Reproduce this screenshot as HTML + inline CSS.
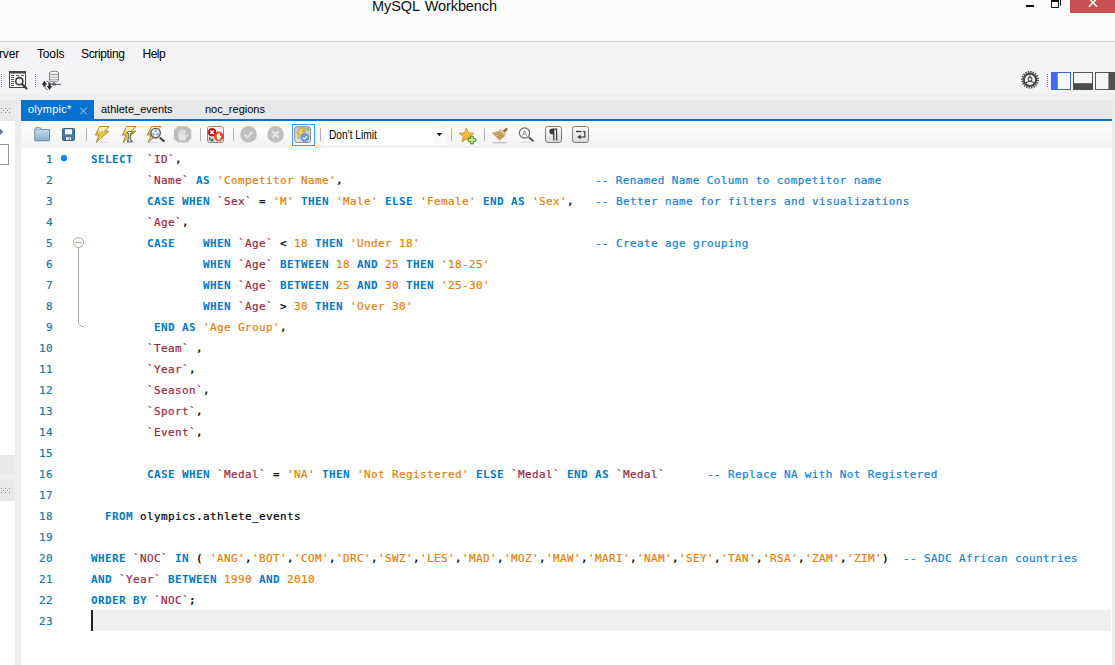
<!DOCTYPE html>
<html lang="en">
<head>
<meta charset="utf-8">
<title>MySQL Workbench</title>
<style>
*{box-sizing:border-box}
html,body{margin:0;padding:0}
html{background:#f4f4f7}
body{width:1115px;height:665px;overflow:hidden;position:relative;background:#f4f4f7;font-family:"Liberation Sans",sans-serif;color:#000}
.abs{position:absolute}
#titlebar{left:0;top:0;width:1115px;height:41px;background:#fbfbfb}
#titleline{left:0;top:41px;width:1115px;height:1px;background:#d3d3d3}
#title{left:372px;top:-4px;word-spacing:1.500px;letter-spacing:-0.1px;font-size:14.5px;line-height:20px;white-space:nowrap;color:#111}
#close{left:1070px;top:0;width:45px;height:13px;background:#c75050}
#menubar{left:0;top:42px;width:1115px;height:56px;background:#f4f4f7}
.menu{top:46px;font-size:12px;line-height:16px;white-space:nowrap;letter-spacing:-0.15px}
#leftpanel{left:0;top:100px;width:15px;height:565px;background:#fff}
.lpb{left:0;width:15px;background:#e8e8e8}
#gutter{left:15px;top:100px;width:6px;height:565px;background:#ededf0}
#band{left:0;top:94px;width:1115px;height:6px;background:#efeff1}
#rightstrip{left:1112px;top:100px;width:3px;height:565px;background:#ededf0}
#tabbar{left:21px;top:100px;width:1091px;height:19px;background:#e8e8e8}
#tabline{left:21px;top:119px;width:1091px;height:2px;background:#0771ce}
#tab1{left:21px;top:100px;width:73px;height:20px;background:#0771ce}
.tab{top:102px;font-size:11px;line-height:14px;white-space:nowrap}
#edtb{left:21px;top:121px;width:1091px;height:27px;background:linear-gradient(#ffffff,#f1f1f3)}
#editor{left:21px;top:148px;width:1091px;height:517px;background:#fff}
#code{left:21px;top:149px;width:1090px;font-family:"DejaVu Sans Mono","Liberation Mono",monospace;font-size:11px;letter-spacing:0.375px;line-height:21px;color:#000;-webkit-text-stroke:0.2px}
.ln{position:relative;height:21px}
.no{position:absolute;right:1058px;top:0;color:#23779a}
.tx{position:absolute;left:70px;top:0;white-space:pre}
.cur::before{content:"";position:absolute;left:70px;top:-1px;width:1020px;height:21px;background:#efefef}
.cur::after{content:"";position:absolute;left:70px;top:-1px;width:2px;height:21px;background:#222}
#code b{color:#0079c6;font-weight:bold;-webkit-text-stroke:0}
#code .i{color:#98283e}
#code .o{font-weight:bold;color:#111;-webkit-text-stroke:0}
#code .s{color:#e47e0a}
#code .n{color:#e47e0a}
#code .c{color:#1282d6}
svg{position:absolute;overflow:hidden}
#limit{left:329px;top:127px;font-size:12px;line-height:16px;white-space:nowrap;transform:scaleX(0.85);transform-origin:0 0;z-index:2}
</style>
</head>
<body>
<div id="titlebar" class="abs"></div>
<div id="titleline" class="abs"></div>
<div id="title" class="abs">MySQL Workbench</div>
<div id="close" class="abs"></div>
<div id="menubar" class="abs"></div>
<div class="menu abs" style="left:-1px">rver</div>
<div class="menu abs" style="left:37px">Tools</div>
<div class="menu abs" style="left:81px;letter-spacing:-0.35px">Scripting</div>
<div class="menu abs" style="left:142.500px;letter-spacing:-0.5px">Help</div>
<div id="band" class="abs"></div>
<div id="leftpanel" class="abs"></div>
<div class="lpb abs" style="top:100px;height:21px"></div>
<div class="lpb abs" style="top:455px;height:19px"></div>
<div class="lpb abs" style="top:474px;height:6px;background:#ededf0"></div>
<div class="lpb abs" style="top:480px;height:21px"></div>
<div id="gutter" class="abs"></div>
<div id="rightstrip" class="abs"></div>
<div id="tabbar" class="abs"></div>
<div id="tab1" class="abs"></div>
<div id="tabline" class="abs"></div>
<div class="tab abs" style="left:28px;color:#fff;letter-spacing:0.25px">olympic*</div>
<div class="tab abs" style="left:101px">athlete_events</div>
<div class="tab abs" style="left:205px">noc_regions</div>
<div id="edtb" class="abs"></div>
<div id="editor" class="abs"></div>
<div id="limit" class="abs">Don't Limit</div>
<div id="code" class="abs">
<div class="ln"><span class="no">1</span><span class="tx"><b>SELECT</b>  <span class="i">`ID`</span><span class="o">,</span></span></div>
<div class="ln"><span class="no">2</span><span class="tx">        <span class="i">`Name`</span> <b>AS</b> <span class="s">'Competitor Name'</span><span class="o">,</span>                                    <span class="c">-- Renamed Name Column to competitor name</span></span></div>
<div class="ln"><span class="no">3</span><span class="tx">        <b>CASE</b> <b>WHEN</b> <span class="i">`Sex`</span> <span class="o">=</span> <span class="s">'M'</span> <b>THEN</b> <span class="s">'Male'</span> <b>ELSE</b> <span class="s">'Female'</span> <b>END</b> <b>AS</b> <span class="s">'Sex'</span><span class="o">,</span>   <span class="c">-- Better name for filters and visualizations</span></span></div>
<div class="ln"><span class="no">4</span><span class="tx">        <span class="i">`Age`</span><span class="o">,</span></span></div>
<div class="ln"><span class="no">5</span><span class="tx">        <b>CASE</b>    <b>WHEN</b> <span class="i">`Age`</span> <span class="o">&lt;</span> <span class="n">18</span> <b>THEN</b> <span class="s">'Under 18'</span>                         <span class="c">-- Create age grouping</span></span></div>
<div class="ln"><span class="no">6</span><span class="tx">                <b>WHEN</b> <span class="i">`Age`</span> <b>BETWEEN</b> <span class="n">18</span> <b>AND</b> <span class="n">25</span> <b>THEN</b> <span class="s">'18-25'</span></span></div>
<div class="ln"><span class="no">7</span><span class="tx">                <b>WHEN</b> <span class="i">`Age`</span> <b>BETWEEN</b> <span class="n">25</span> <b>AND</b> <span class="n">30</span> <b>THEN</b> <span class="s">'25-30'</span></span></div>
<div class="ln"><span class="no">8</span><span class="tx">                <b>WHEN</b> <span class="i">`Age`</span> <span class="o">&gt;</span> <span class="n">30</span> <b>THEN</b> <span class="s">'Over 30'</span></span></div>
<div class="ln"><span class="no">9</span><span class="tx">         <b>END</b> <b>AS</b> <span class="s">'Age Group'</span><span class="o">,</span></span></div>
<div class="ln"><span class="no">10</span><span class="tx">        <span class="i">`Team`</span> <span class="o">,</span></span></div>
<div class="ln"><span class="no">11</span><span class="tx">        <span class="i">`Year`</span><span class="o">,</span></span></div>
<div class="ln"><span class="no">12</span><span class="tx">        <span class="i">`Season`</span><span class="o">,</span></span></div>
<div class="ln"><span class="no">13</span><span class="tx">        <span class="i">`Sport`</span><span class="o">,</span></span></div>
<div class="ln"><span class="no">14</span><span class="tx">        <span class="i">`Event`</span><span class="o">,</span></span></div>
<div class="ln"><span class="no">15</span><span class="tx"></span></div>
<div class="ln"><span class="no">16</span><span class="tx">        <b>CASE</b> <b>WHEN</b> <span class="i">`Medal`</span> <span class="o">=</span> <span class="s">'NA'</span> <b>THEN</b> <span class="s">'Not Registered'</span> <b>ELSE</b> <span class="i">`Medal`</span> <b>END</b> <b>AS</b> <span class="i">`Medal`</span>      <span class="c">-- Replace NA with Not Registered</span></span></div>
<div class="ln"><span class="no">17</span><span class="tx"></span></div>
<div class="ln"><span class="no">18</span><span class="tx">  <b>FROM</b> olympics<span class="o">.</span>athlete_events</span></div>
<div class="ln"><span class="no">19</span><span class="tx"></span></div>
<div class="ln"><span class="no">20</span><span class="tx"><b>WHERE</b> <span class="i">`NOC`</span> <b>IN</b> <span class="o">(</span> <span class="s">'ANG'</span><span class="o">,</span><span class="s">'BOT'</span><span class="o">,</span><span class="s">'COM'</span><span class="o">,</span><span class="s">'DRC'</span><span class="o">,</span><span class="s">'SWZ'</span><span class="o">,</span><span class="s">'LES'</span><span class="o">,</span><span class="s">'MAD'</span><span class="o">,</span><span class="s">'MOZ'</span><span class="o">,</span><span class="s">'MAW'</span><span class="o">,</span><span class="s">'MARI'</span><span class="o">,</span><span class="s">'NAM'</span><span class="o">,</span><span class="s">'SEY'</span><span class="o">,</span><span class="s">'TAN'</span><span class="o">,</span><span class="s">'RSA'</span><span class="o">,</span><span class="s">'ZAM'</span><span class="o">,</span><span class="s">'ZIM'</span><span class="o">)</span>  <span class="c">-- SADC African countries</span></span></div>
<div class="ln"><span class="no">21</span><span class="tx"><b>AND</b> <span class="i">`Year`</span> <b>BETWEEN</b> <span class="n">1990</span> <b>AND</b> <span class="n">2010</span></span></div>
<div class="ln"><span class="no">22</span><span class="tx"><b>ORDER</b> <b>BY</b> <span class="i">`NOC`</span><span class="o">;</span></span></div>
<div class="ln cur"><span class="no">23</span><span class="tx"></span></div>
</div>
<svg id="ov" width="1115" height="665" viewBox="0 0 1115 665" style="left:0;top:0;pointer-events:none">
<defs>
<linearGradient id="gFolder" x1="0" y1="0" x2="0" y2="1"><stop offset="0" stop-color="#cfe3f1"/><stop offset="1" stop-color="#85abc9"/></linearGradient>
<linearGradient id="gBolt" x1="0" y1="0" x2="0" y2="1"><stop offset="0" stop-color="#fdf9d8"/><stop offset="0.28" stop-color="#f6ea9c"/><stop offset="0.34" stop-color="#e2c440"/><stop offset="0.6" stop-color="#e4c84c"/><stop offset="1" stop-color="#f2e08a"/></linearGradient>
<linearGradient id="gBtn" x1="0" y1="0" x2="0" y2="1"><stop offset="0" stop-color="#fdfdfd"/><stop offset="1" stop-color="#d9d9d9"/></linearGradient>
<linearGradient id="gTog" x1="0" y1="0" x2="0" y2="1"><stop offset="0" stop-color="#c2c2c2"/><stop offset="1" stop-color="#e4e4e4"/></linearGradient>
<linearGradient id="gStar" x1="0" y1="0" x2="0" y2="1"><stop offset="0" stop-color="#fbd65a"/><stop offset="1" stop-color="#f0a21e"/></linearGradient>
<linearGradient id="gBroom" x1="0" y1="0" x2="1" y2="1"><stop offset="0" stop-color="#e8cf95"/><stop offset="1" stop-color="#c39a4c"/></linearGradient>
</defs>

<!-- window buttons -->
<rect x="1026" y="5" width="8" height="2" fill="#111"/>
<path d="M1051.500 0 V7.500 H1058.500 V0 M1051 1.500 H1059 M1060.500 0 V5.700" fill="none" stroke="#111" stroke-width="1"/>
<rect x="1051" y="0" width="8" height="2" fill="#111"/>
<path d="M1089 -1.600 L1097 6.800 M1097 -1.600 L1089 6.800" stroke="#fff" stroke-width="1.500" fill="none"/>

<!-- main toolbar -->
<g transform="translate(1 74)" fill="#6d7f9c"><rect x="0" y="0" width="1" height="1"/><rect x="0" y="2" width="1" height="1"/><rect x="0" y="4" width="1" height="1"/><rect x="0" y="6" width="1" height="1"/><rect x="0" y="8" width="1" height="1"/><rect x="0" y="10" width="1" height="1"/><rect x="0" y="12" width="1" height="1"/></g>
<g transform="translate(35 74)" fill="#6d7f9c"><rect x="0" y="0" width="1" height="1"/><rect x="0" y="2" width="1" height="1"/><rect x="0" y="4" width="1" height="1"/><rect x="0" y="6" width="1" height="1"/><rect x="0" y="8" width="1" height="1"/><rect x="0" y="10" width="1" height="1"/><rect x="0" y="12" width="1" height="1"/></g>
<g>
<rect x="9.500" y="71.500" width="16" height="16" fill="#f7f7f7" stroke="#454545" stroke-width="1"/>
<rect x="9" y="71" width="17" height="2.500" fill="#454545"/>
<g fill="#555"><rect x="11" y="75" width="3" height="1"/><rect x="16" y="75" width="3" height="1"/><rect x="21" y="75" width="3" height="1"/><rect x="11" y="77" width="3" height="1"/><rect x="11" y="79" width="3" height="1"/><rect x="11" y="81" width="3" height="1"/><rect x="11" y="83" width="3" height="1"/><rect x="11" y="85" width="3" height="1"/></g>
<circle cx="19.300" cy="81.200" r="3.600" fill="#f2f2f2" stroke="#3c3c3c" stroke-width="1.600"/>
<path d="M22.200 84.200 L26.500 88.500" stroke="#3c3c3c" stroke-width="2.200" stroke-linecap="round"/>
</g>
<g>
<path d="M49.500 73 V80 C49.500 82.300 58.500 82.300 58.500 80 V73" fill="#fdfdfd" stroke="#777" stroke-width="0.900"/>
<ellipse cx="54" cy="73" rx="4.500" ry="1.800" fill="#fdfdfd" stroke="#777" stroke-width="0.900"/>
<path d="M49.500 75.700 C49.500 78 58.500 78 58.500 75.700 M49.500 78.200 C49.500 80.500 58.500 80.500 58.500 78.200" fill="none" stroke="#8a8a8a" stroke-width="0.800"/>
<path d="M54 82 V84.400 M50.500 84.400 H61" stroke="#555" stroke-width="1" fill="none"/>
<rect x="52" y="83.400" width="4" height="2" fill="#556"/>
<path d="M41.700 84.800 L44.400 80.800 L47.100 84.800 H45.500 V86.800 H43.300 V84.800 Z" fill="#2c2c2c"/>
<path d="M46.800 86 L49.500 90 L52.200 86 H50.600 V82.800 H48.400 V86 Z" fill="#2c2c2c"/>
<path d="M46.500 81.300 C48.500 81.500 49.500 82.600 49.600 84 M45 87.300 C45.300 88.600 46.300 89.400 47.600 89.500" stroke="#444" stroke-width="0.900" fill="none"/>
</g>
<!-- right toolbar -->
<g>
<circle cx="1030" cy="79.800" r="8" fill="none" stroke="#474747" stroke-width="1.800" stroke-dasharray="1.350 1.163"/>
<circle cx="1030" cy="79.800" r="6.200" fill="#f4f4f7" stroke="#474747" stroke-width="2.200"/>
<circle cx="1030" cy="79.300" r="1.900" fill="#f4f4f7" stroke="#474747" stroke-width="1.100"/>
<path d="M1030 74.500 V77.300 M1025.300 84 C1026.500 80.700 1033.500 80.700 1034.700 84" fill="none" stroke="#474747" stroke-width="1.100"/>
</g>
<g transform="translate(1047 74)" fill="#6d7f9c"><rect x="0" y="0" width="1" height="1"/><rect x="0" y="2" width="1" height="1"/><rect x="0" y="4" width="1" height="1"/><rect x="0" y="6" width="1" height="1"/><rect x="0" y="8" width="1" height="1"/><rect x="0" y="10" width="1" height="1"/><rect x="0" y="12" width="1" height="1"/></g>
<rect x="1051.500" y="72.500" width="19" height="17" fill="#f6f6f8" stroke="#4060d8" stroke-width="1"/>
<rect x="1051" y="72" width="6.800" height="18" fill="#3f6cf0"/>
<rect x="1073.500" y="72.500" width="19" height="17" fill="#f6f6f8" stroke="#555" stroke-width="1"/>
<rect x="1073" y="83.200" width="20" height="6.800" fill="#4c4c4c"/>
<rect x="1095.500" y="72.500" width="19" height="17" fill="#f6f6f8" stroke="#555" stroke-width="1"/>
<rect x="1108.400" y="72" width="7" height="18" fill="#505050"/>

<!-- left panel -->
<g transform="translate(1 108)" fill="#8c8c8c"><rect x="0" y="0" width="1" height="1"/><rect x="4" y="0" width="1" height="1"/><rect x="8" y="0" width="1" height="1"/><rect x="2" y="2" width="1" height="1"/><rect x="6" y="2" width="1" height="1"/><rect x="0" y="4" width="1" height="1"/><rect x="4" y="4" width="1" height="1"/><rect x="8" y="4" width="1" height="1"/></g>
<g transform="translate(1 488)" fill="#8c8c8c"><rect x="0" y="0" width="1" height="1"/><rect x="4" y="0" width="1" height="1"/><rect x="8" y="0" width="1" height="1"/><rect x="2" y="2" width="1" height="1"/><rect x="6" y="2" width="1" height="1"/><rect x="0" y="4" width="1" height="1"/><rect x="4" y="4" width="1" height="1"/><rect x="8" y="4" width="1" height="1"/></g>
<path d="M-1 129 L0.500 129 L3.200 131.700 L0.500 134.500 L-1 134.500 Z" fill="#5f7391"/>
<rect x="-2.500" y="144.500" width="11" height="20" fill="#fff" stroke="#9096a2" stroke-width="1"/>

<!-- tab close -->
<path d="M80 107.500 L87 114.500 M87 107.500 L80 114.500" stroke="#b4d4f2" stroke-width="1" fill="none"/>

<!-- editor toolbar -->
<g>
<path d="M34.700 140.300 V129.800 L35.800 127.700 H40.300 L41.300 129.500 H49 Q49.500 129.500 49.500 130 V140.300 Q49.500 140.800 49 140.800 H35.200 Q34.700 140.800 34.700 140.300 Z" fill="url(#gFolder)" stroke="#5b86a8" stroke-width="0.900"/>
<path d="M35.800 129.600 H40.800" stroke="#7ea3c0" stroke-width="0.800"/>
</g>
<g>
<rect x="62.500" y="128.500" width="12" height="12" rx="1" fill="#4a7a9d" stroke="#35607f" stroke-width="1"/>
<rect x="65" y="129.300" width="7" height="5" fill="#fbfbfb"/>
<rect x="66" y="137" width="5" height="3" fill="#e2e6ea"/>
<rect x="68.800" y="137.500" width="1.200" height="2.200" fill="#5a7f9b"/>
</g>
<g transform="translate(86 128)"><rect x="0" y="0" width="1" height="13" fill="#b4b4b4"/></g>
<ellipse cx="102" cy="142.400" rx="6" ry="0.700" fill="#d8d8d8"/><ellipse cx="129" cy="142.400" rx="6" ry="0.700" fill="#d8d8d8"/><ellipse cx="154" cy="142.400" rx="6" ry="0.700" fill="#d8d8d8"/>
<g transform="translate(95 126)"><path d="M4.6 0.5 L14 0.5 L9.6 5.2 L13.8 5.2 L1.2 16.3 L4 9 L0.4 9 Z" fill="url(#gBolt)" stroke="#a47c22" stroke-width="0.9" stroke-linejoin="round"/></g>
<g transform="translate(122 126)"><path d="M4.6 0.5 L14 0.5 L9.6 5.2 L13.8 5.2 L1.2 16.3 L4 9 L0.4 9 Z" fill="url(#gBolt)" stroke="#a47c22" stroke-width="0.9" stroke-linejoin="round"/></g>
<path d="M128.300 132.600 H131.300 M129.800 132.600 V141 M128.300 141 H131.300" stroke="#2a2a2a" stroke-width="2.400" fill="none" stroke-linecap="round"/>
<path d="M128.400 132.600 H131.200 M129.800 132.600 V141 M128.400 141 H131.200" stroke="#fff" stroke-width="1.100" fill="none" stroke-linecap="round"/>
<g transform="translate(147 126)"><path d="M4.6 0.5 L14 0.5 L9.6 5.2 L13.8 5.2 L1.2 16.3 L4 9 L0.4 9 Z" fill="url(#gBolt)" stroke="#a47c22" stroke-width="0.9" stroke-linejoin="round"/></g>
<g>
<circle cx="155.600" cy="133.100" r="4.700" fill="#f6f3e6" stroke="#5c5c5c" stroke-width="1.400"/>
<circle cx="155.600" cy="130.900" r="1.400" fill="#8fb3e6"/><circle cx="153.400" cy="134.400" r="1.400" fill="#8fb3e6"/><circle cx="157.800" cy="134.400" r="1.400" fill="#8fb3e6"/>
<path d="M159.700 137.500 L164.400 141.600" stroke="#444" stroke-width="2.200" stroke-linecap="butt"/>
</g>
<g>
<path d="M177.800 126.200 H187.300 L191.200 130.100 V138.700 L187.300 142.600 H177.800 L173.900 138.700 V130.100 Z" fill="#bdbdbd"/>
<g fill="#e6e6e6"><rect x="178.600" y="131.200" width="1.400" height="6" rx="0.700"/><rect x="180.400" y="129.300" width="1.400" height="7" rx="0.700"/><rect x="182.200" y="128.900" width="1.400" height="7" rx="0.700"/><rect x="184" y="129.900" width="1.400" height="7" rx="0.700"/><path d="M178.600 134.800 H185.400 V136.200 L187.200 133.800 Q188.300 133.600 188 134.800 L185.600 139 Q184.600 140.600 182.800 140.600 H181.400 Q178.600 140.200 178.600 137.400 Z"/></g>
</g>
<g transform="translate(200 128)"><rect x="0" y="0" width="1" height="13" fill="#b4b4b4"/></g>
<g>
<rect x="207.500" y="126.500" width="16" height="16" rx="2.200" fill="url(#gBtn)" stroke="#8a8a8a" stroke-width="1"/>
<path d="M209.800 137 V140 H213 M211.600 138.500 L213.300 140 L211.600 141.500" stroke="#333" stroke-width="1" fill="none"/>
<circle cx="212.100" cy="132.200" r="3.900" fill="#cc0f1a" stroke="#960a12" stroke-width="0.600"/>
<path d="M210.400 130.500 L213.800 133.900 M213.800 130.500 L210.400 133.900" stroke="#fff" stroke-width="1.400"/>
<path d="M216.900 131.900 H220.500 L223.100 134.500 V138.200 L220.500 140.800 H216.900 L214.300 138.200 V134.500 Z" fill="#e84a14" stroke="#c23a0c" stroke-width="0.500"/>
<path d="M216.800 138.500 V135 L217.500 134.300 V133.600 H218.300 V133.200 H219.200 V133.600 H220 V136.400 L221.200 135.400 L221.600 136 L220 139.200 Q219.400 139.800 218.400 139.800 Q217.200 139.600 216.800 138.500 Z" fill="#fff"/>
</g>
<g transform="translate(233 128)"><rect x="0" y="0" width="1" height="13" fill="#b4b4b4"/></g>
<circle cx="248.500" cy="134.400" r="8.300" fill="#bfbfbf"/>
<path d="M244.500 134.600 L247.300 137.300 L252.500 131.500" stroke="#e6e6e6" stroke-width="2" fill="none"/>
<circle cx="275.500" cy="134.400" r="8.300" fill="#bfbfbf"/>
<path d="M272.400 131.300 L278.600 137.500 M278.600 131.300 L272.400 137.500" stroke="#e6e6e6" stroke-width="2.100" fill="none"/>
<rect x="292.500" y="124.500" width="22" height="21" fill="#fcfcfc" stroke="#3a96f4" stroke-width="1"/>
<g>
<rect x="294.700" y="126.700" width="15.800" height="15.800" rx="2.500" fill="url(#gTog)" stroke="#8c8c8c" stroke-width="1"/>
<path d="M299.500 128.200 H305.200 L302.600 131.300 H305.300 L297.900 138.900 L299.600 134 H297.500 Z" fill="#efd45c" stroke="#b08a28" stroke-width="0.700" stroke-linejoin="round"/>
<circle cx="307.600" cy="129.600" r="1.100" fill="#3cc83c"/>
<circle cx="304.900" cy="137.600" r="4" fill="#6a9ee4" stroke="#4a80cc" stroke-width="0.600"/>
<path d="M303 137.600 L304.500 139 L307 136.200" stroke="#fff" stroke-width="1.100" fill="none"/>
</g>
<g transform="translate(320 128)"><rect x="0" y="0" width="1" height="13" fill="#b4b4b4"/></g>
<rect x="325" y="124" width="121" height="21" fill="#fff"/>
<rect x="434" y="125" width="12" height="19" fill="#f9f9f9"/>
<path d="M436.600 133 H442.200 L439.400 136.200 Z" fill="#111"/>
<g transform="translate(451 128)"><rect x="0" y="0" width="1" height="13" fill="#b4b4b4"/></g>
<g>
<path d="M466.5 127.8 L468.4 132.9 L473.9 133.2 L469.6 136.6 L471.1 141.9 L466.5 138.9 L461.9 141.9 L463.4 136.6 L459.1 133.2 L464.6 132.9 Z" fill="url(#gStar)" stroke="#c08a14" stroke-width="0.800" stroke-linejoin="round"/>
<path d="M470.600 136.200 H473.400 V138.600 H475.800 V141.400 H473.400 V143.800 H470.600 V141.400 H468.200 V138.600 H470.600 Z" fill="#bdeb98" stroke="#4c7e1c" stroke-width="0.900" stroke-linejoin="round"/>
</g>
<g transform="translate(484 128)"><rect x="0" y="0" width="1" height="13" fill="#b4b4b4"/></g>
<g>
<ellipse cx="499.500" cy="142.600" rx="8.500" ry="0.900" fill="#c9c9c9"/>
<path d="M504.200 131.200 L506.400 129.300" stroke="#9a6a20" stroke-width="2.600" stroke-linecap="round"/>
<path d="M500.800 129.300 L505.800 133.600 L504.600 135.800 L499.300 131 Z" fill="#d8d0bc" stroke="#a89c80" stroke-width="0.500"/>
<path d="M499.600 130.600 L505 135.500 L499.800 140.800 L491.600 132.800 Z" fill="url(#gBroom)"/>
<path d="M493 133.600 L500.600 132 M494.600 135.200 L502 133.400 M496.200 136.800 L503.400 134.800 M497.800 138.400 L504.400 136.400" stroke="#a07c34" stroke-width="0.700" fill="none"/>
</g>
<g>
<ellipse cx="526" cy="142.400" rx="6" ry="0.700" fill="#dcdcdc"/><path d="M528.800 137.200 L533.600 141.300" stroke="#555" stroke-width="2"/>
<circle cx="524.500" cy="133" r="5.100" fill="#fbfbfb" stroke="#636363" stroke-width="1.100"/>
<path d="M522.500 135.800 L524.500 130.400 L526.500 135.800 M523.300 134 H525.700" stroke="#8a8a8a" stroke-width="0.900" fill="none"/>
</g>
<g>
<rect x="545.500" y="126.500" width="16" height="16" rx="2.200" fill="url(#gBtn)" stroke="#7c7c7c" stroke-width="1"/>
<path d="M552.800 128.600 H557.200 V140.600 H556 V129.700 H554.400 V140.600 H553.200 V134.400 Q549.300 134.400 549.300 131.500 Q549.300 128.600 552.800 128.600 Z" fill="#3c3c3c"/>
</g>
<g>
<rect x="572.500" y="126.500" width="16" height="16" rx="2.200" fill="url(#gBtn)" stroke="#7c7c7c" stroke-width="1"/>
<path d="M576 131.500 H581.500" stroke="#333" stroke-width="1.300"/>
<path d="M582.800 131.500 H584.800 V137 H579.500" stroke="#333" stroke-width="1.200" fill="none"/>
<path d="M580.500 134.700 L577.300 137 L580.500 139.300 Z" fill="#333"/>
</g>

<!-- editor marks -->
<circle cx="64" cy="158.200" r="3.100" fill="#0a84ff"/>
<circle cx="78.500" cy="242.500" r="5" fill="#fff" stroke="#a9a994" stroke-width="1"/>
<path d="M75 242.500 H82" stroke="#a9a994" stroke-width="1"/>
<path d="M78.500 248 V323.500 L81.500 326.500 H84" fill="none" stroke="#a9a994" stroke-width="1"/>
</svg>

</body>
</html>
